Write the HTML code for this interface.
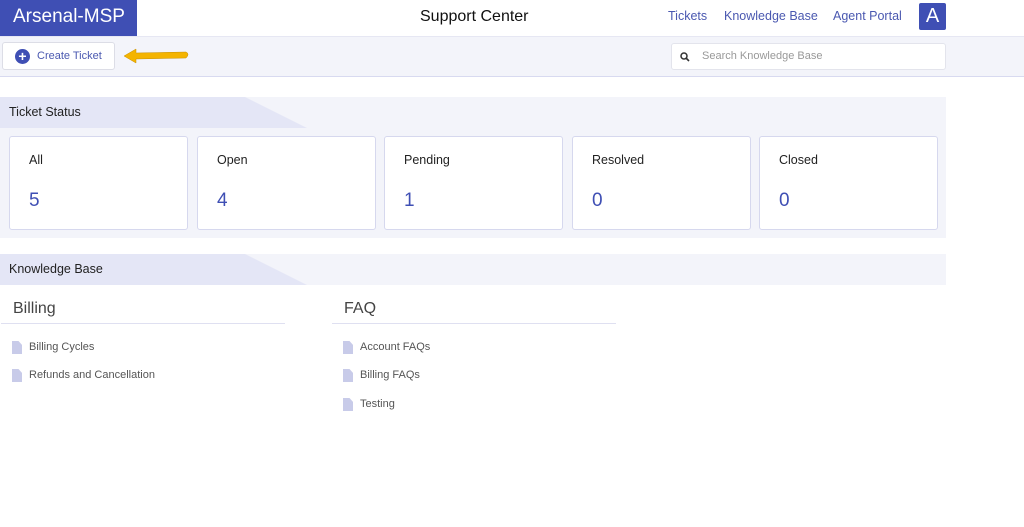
<!DOCTYPE html>
<html><head><style>
*{margin:0;padding:0;box-sizing:border-box}
body{width:1024px;height:527px;background:#fff;font-family:"Liberation Sans",sans-serif;position:relative;overflow:hidden;color:#222}
.abs{position:absolute}
.brand{left:0;top:0;width:137px;height:36px;background:#3f4fb4;color:#fff;font-size:19px;line-height:34px;padding-left:13px}
.title{left:420px;top:8px;font-size:16px;color:#111}
.nav{top:9px;font-size:12.5px;color:#4a58b0}
.av{left:919px;top:3px;width:27px;height:27px;background:#3f4fb4;color:#fff;border-radius:2px;font-size:20px;text-align:center;line-height:27px}
.bar{left:0;top:36px;width:1024px;height:41px;background:#f3f4fa;border-top:1px solid #e6e7f3;border-bottom:1px solid #d8daf0}
.btn{left:2px;top:42px;width:113px;height:28px;background:#fff;border:1px solid #dcdde6;border-radius:3px;font-size:11px;color:#4a58b0;line-height:26px;padding-left:34px}
.plus{left:15px;top:49px;width:15px;height:15px;border-radius:50%;background:#3f4fb4;color:#fff;font-size:14px;line-height:15px;text-align:center;font-weight:bold}
.search{left:671px;top:43px;width:275px;height:27px;background:#fff;border:1px solid #e3e4ec;border-radius:3px;font-size:11px;color:#999;line-height:25px;padding-left:30px}
.band{left:0;width:946px;height:31px;background:#f3f4fa}
.band .tr{position:absolute;left:0;top:0;width:307px;height:31px;background:#e4e6f6;clip-path:polygon(0 0,245px 0,100% 100%,0 100%)}
.band span{position:absolute;left:9px;top:8px;font-size:12.5px;color:#222}
.cards{left:0;top:128px;width:946px;height:110px;background:#f3f4fa}
.card{top:136px;width:179px;height:94px;background:#fff;border:1px solid #d6d8ee;border-radius:3px}
.card .l{position:absolute;left:19px;top:16px;font-size:12.5px}
.card .n{position:absolute;left:19px;top:53px;font-size:19px;color:#3f4fb4}
.h{font-size:16px;color:#444}
.line{height:1px;background:#dfe0f1}
.it{font-size:11px;color:#555}
.doc{width:10px;height:13px;background:#c8cbe9;clip-path:polygon(0 0,65% 0,100% 30%,100% 100%,0 100%)}
</style></head><body>
<div class="abs brand">Arsenal-MSP</div>
<div class="abs title">Support Center</div>
<div class="abs nav" style="left:668px">Tickets</div>
<div class="abs nav" style="left:724px">Knowledge Base</div>
<div class="abs nav" style="left:833px">Agent Portal</div>
<div class="abs av">A</div>
<div class="abs bar"></div>
<div class="abs btn">Create Ticket</div>
<div class="abs plus">+</div>
<svg class="abs" style="left:120px;top:46px" width="72" height="20"><path d="M4 10 L16 3 L16 7 L66 6 Q70 8 66 12 L16 13 L16 17 Z" fill="#f4b400" stroke="#c89000" stroke-width=".5"/></svg>
<div class="abs search">Search Knowledge Base</div>
<svg class="abs" style="left:680px;top:52px" width="10" height="10"><circle cx="4" cy="4" r="3" fill="none" stroke="#333" stroke-width="1.5"/><path d="M6 6 L9 9" stroke="#333" stroke-width="1.6"/></svg>
<div class="abs band" style="top:97px"><div class="tr"></div><span>Ticket Status</span></div>
<div class="abs cards"></div>
<div class="abs card" style="left:9px"><div class="l">All</div><div class="n">5</div></div>
<div class="abs card" style="left:197px"><div class="l">Open</div><div class="n">4</div></div>
<div class="abs card" style="left:384px"><div class="l">Pending</div><div class="n">1</div></div>
<div class="abs card" style="left:572px"><div class="l">Resolved</div><div class="n">0</div></div>
<div class="abs card" style="left:759px"><div class="l">Closed</div><div class="n">0</div></div>
<div class="abs band" style="top:254px"><div class="tr"></div><span>Knowledge Base</span></div>
<div class="abs h" style="left:13px;top:300px">Billing</div>
<div class="abs line" style="left:1px;top:323px;width:284px"></div>
<div class="abs h" style="left:344px;top:300px">FAQ</div>
<div class="abs line" style="left:332px;top:323px;width:284px"></div>
<div class="abs doc" style="left:12px;top:341px"></div><div class="abs it" style="left:29px;top:341px">Billing Cycles</div>
<div class="abs doc" style="left:12px;top:369px"></div><div class="abs it" style="left:29px;top:369px">Refunds and Cancellation</div>
<div class="abs doc" style="left:343px;top:341px"></div><div class="abs it" style="left:360px;top:341px">Account FAQs</div>
<div class="abs doc" style="left:343px;top:369px"></div><div class="abs it" style="left:360px;top:369px">Billing FAQs</div>
<div class="abs doc" style="left:343px;top:398px"></div><div class="abs it" style="left:360px;top:398px">Testing</div>
</body></html>
